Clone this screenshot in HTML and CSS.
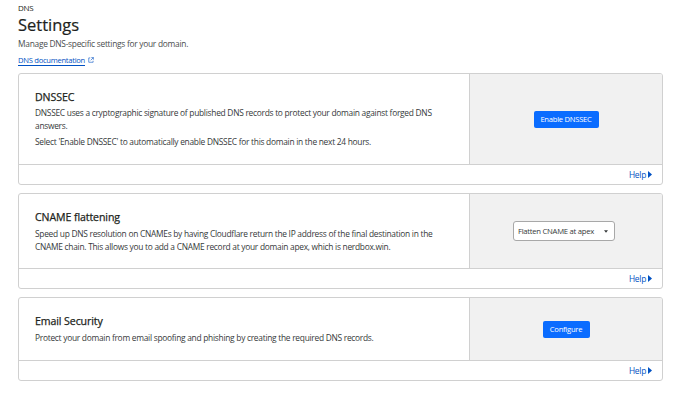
FILE: index.html
```html
<!DOCTYPE html>
<html lang="en">
<head>
<meta charset="utf-8">
<title>DNS Settings</title>
<link rel="stylesheet" href="styles.css">
</head>
<body>
<main class="page">
  <header class="head">
    <div class="crumb">DNS</div>
    <h1 class="title">Settings</h1>
    <p class="sub">Manage DNS-specific settings for your domain.</p>
    <a class="doc" href="#"><span class="doc-text">DNS documentation</span>
      <svg class="ext" viewBox="0 0 8 8" width="6" height="6"><path d="M3 1.2H1v5.8h5.8V5M4.4.8h2.8v2.8M7.2.8 3.6 4.4" fill="none" stroke="#0051c3" stroke-width=".8"/></svg>
    </a>
  </header>

  <section class="card card-dnssec">
    <div class="main">
      <div class="info">
        <h2 class="name">DNSSEC</h2>
        <p class="text">DNSSEC uses a cryptographic signature of published DNS records to protect your domain against forged DNS answers.</p>
        <p class="text gap">Select 'Enable DNSSEC' to automatically enable DNSSEC for this domain in the next 24 hours.</p>
      </div>
      <div class="control"><button class="btn btn-wide">Enable DNSSEC</button></div>
    </div>
    <div class="foot"><a class="help" href="#">Help<svg class="tri" viewBox="0 0 4 7" width="4" height="7"><path d="M0 0l4 3.5L0 7z" fill="#0051c3"/></svg></a></div>
  </section>

  <section class="card card-cname">
    <div class="main">
      <div class="info">
        <h2 class="name">CNAME flattening</h2>
        <p class="text">Speed up DNS resolution on CNAMEs by having Cloudflare return the IP address of the final destination in the CNAME chain. This allows you to add a CNAME record at your domain apex, which is nerdbox.win.</p>
      </div>
      <div class="control">
        <div class="select"><span>Flatten CNAME at apex</span><svg viewBox="0 0 6 4" width="5" height="3"><path d="M0 0h6L3 4z" fill="#36393a"/></svg></div>
      </div>
    </div>
    <div class="foot"><a class="help" href="#">Help<svg class="tri" viewBox="0 0 4 7" width="4" height="7"><path d="M0 0l4 3.5L0 7z" fill="#0051c3"/></svg></a></div>
  </section>

  <section class="card card-email">
    <div class="main">
      <div class="info">
        <h2 class="name">Email Security</h2>
        <p class="text">Protect your domain from email spoofing and phishing by creating the required DNS records.</p>
      </div>
      <div class="control"><button class="btn btn-narrow">Configure</button></div>
    </div>
    <div class="foot"><a class="help" href="#">Help<svg class="tri" viewBox="0 0 4 7" width="4" height="7"><path d="M0 0l4 3.5L0 7z" fill="#0051c3"/></svg></a></div>
  </section>
</main>
</body>
</html>
```
FILE: styles.css
```css
* { box-sizing: border-box; }
html, body { margin: 0; padding: 0; background: #fff; }
body { font-family: "Open Sans", "Noto Sans", sans-serif; color: #36393a; letter-spacing: -.27px; }
.page { padding: 2px 27px 0 18px; display: flex; flex-direction: column; }
.crumb { font-size: 8px; line-height: 11px; color: #1d1f20; }
.title { margin: 0; font-size: 16.5px; line-height: 24px; font-weight: 400; letter-spacing: 0; color: #1d1f20; -webkit-text-stroke: .2px #1d1f20; }
.sub { margin: 1px 0 0; font-size: 8.4px; line-height: 12px; color: #4a4d4e; }
.doc { display: flex; align-items: center; gap: 3px; margin-top: 4px; height: 12px; font-size: 7.6px; color: #0051c3; text-decoration: none; }
.doc-text { border-bottom: 1px solid #0051c3; line-height: 10px; }
.card { border: 1px solid #d0d0d0; border-radius: 3px; display: flex; flex-direction: column; margin-top: 8px; overflow: hidden; }
.head + .card { margin-top: 7px; }
.main { flex: 1; display: flex; border-bottom: 1px solid #d0d0d0; }
.card-dnssec { height: 112px; }
.card-cname { height: 96px; }
.card-email { height: 84px; }
.info { width: 451px; padding: 16px 16px 0; border-right: 1px solid #d0d0d0; }
.name { margin: 0; font-size: 10.6px; line-height: 15px; font-weight: 400; letter-spacing: -.1px; color: #1d1f20; -webkit-text-stroke: .25px #1d1f20; }
.text { margin: 2px 0 0; font-size: 8.4px; line-height: 12.5px; color: #36393a; }
.card-cname .text, .card-email .text { margin-top: 3px; }
.gap { margin-top: 4px; }
.control { flex: 1; background: #f1f1f1; display: flex; align-items: center; justify-content: center; }
.btn { height: 17px; padding: 0; border: 0; border-radius: 2px; background: #0a6cff; color: #fff; font: 7.6px "Open Sans", sans-serif; letter-spacing: -.25px; }
.btn-wide { width: 65px; }
.btn-narrow { width: 47px; }
.select { width: 102px; height: 20px; margin-right: 4px; display: flex; align-items: center; justify-content: space-between; padding: 0 5px 0 4px; background: #fff; border: 1px solid #a8a8a8; border-radius: 3px; font-size: 7.7px; color: #36393a; }
.select svg { width: 4px; height: 3px; margin-right: 1px; }
.foot { height: 19px; flex: none; display: flex; align-items: center; justify-content: flex-end; padding-right: 10px; }
.help { display: flex; align-items: center; gap: 2px; font-size: 8.4px; color: #0051c3; text-decoration: none; }
```
